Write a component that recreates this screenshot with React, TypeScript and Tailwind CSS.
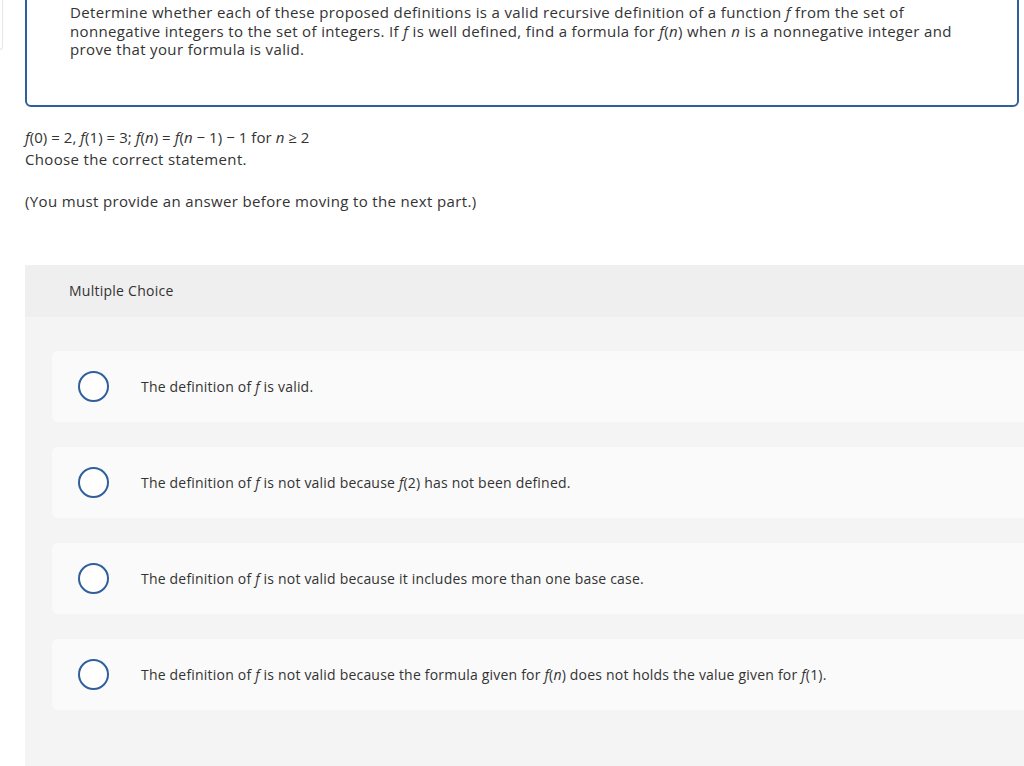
const options = [
  <>The definition of <i>f</i> is valid.</>,
  <>
    The definition of <i>f</i> is not valid because <i>f</i>(2) has not been defined.
  </>,
  <>
    The definition of <i>f</i> is not valid because it includes more than one base case.
  </>,
  <>
    The definition of <i>f</i> is not valid because the formula given for <i>f</i>(<i>n</i>) does not
    holds the value given for <i>f</i>(1).
  </>,
];

const App = () => {
  return (
    <div className="min-h-[766px] bg-white overflow-hidden text-[#333] font-['Open_Sans',Arial,sans-serif]">
      <div className="flex items-start">
        <div className="w-[3px] h-[50px] shrink-0 border-r border-b border-gray-200 rounded-br" />
        <div className="ml-[22px] w-[994px] -mt-[30px] pt-[31px] pb-[46px] pl-[43px] pr-[40px] border-2 border-[#2f5f9c] rounded-[6px] text-[15px] leading-[18.5px] tracking-[0.35px] whitespace-nowrap">
          Determine whether each of these proposed definitions is a valid recursive definition of a
          function <i>f</i> from the set of
          <br />
          nonnegative integers to the set of integers. If <i>f</i> is well defined, find a formula for{" "}
          <i>f</i>(<i>n</i>) when <i>n</i> is a nonnegative integer and
          <br />
          prove that your formula is valid.
        </div>
      </div>

      <div className="ml-[25px] mt-[19px] text-[15px] leading-[22px] tracking-[0.35px]">
        <p className="tracking-[0.05px]">
          <i>f</i>(0) = 2, <i>f</i>(1) = 3; <i>f</i>(<i>n</i>) = <i>f</i>(<i>n</i> − 1) − 1 for{" "}
          <i>n</i> ≥ 2
        </p>
        <p>Choose the correct statement.</p>
        <p className="mt-[20px]">(You must provide an answer before moving to the next part.)</p>
      </div>

      <div className="ml-[25px] mt-[53px]">
        <div className="h-[52px] flex items-center pl-[44px] bg-[#efefef] text-[14px] tracking-[0.25px]">
          Multiple Choice
        </div>
        <div className="bg-[#f4f4f4] pt-[34px] pb-[56px] pl-[27px] flex flex-col gap-[25px]">
          {options.map((opt, i) => (
            <div
              key={i}
              className="h-[71px] flex items-center bg-[#fafafa] rounded-l-md pl-[26px] text-[14px] tracking-[0.2px]"
            >
              <span className="w-[31px] h-[31px] shrink-0 rounded-full border-2 border-[#2f5f9c] bg-white" />
              <span className="ml-[32px]">{opt}</span>
            </div>
          ))}
        </div>
      </div>
    </div>
  );
};

export default App;
